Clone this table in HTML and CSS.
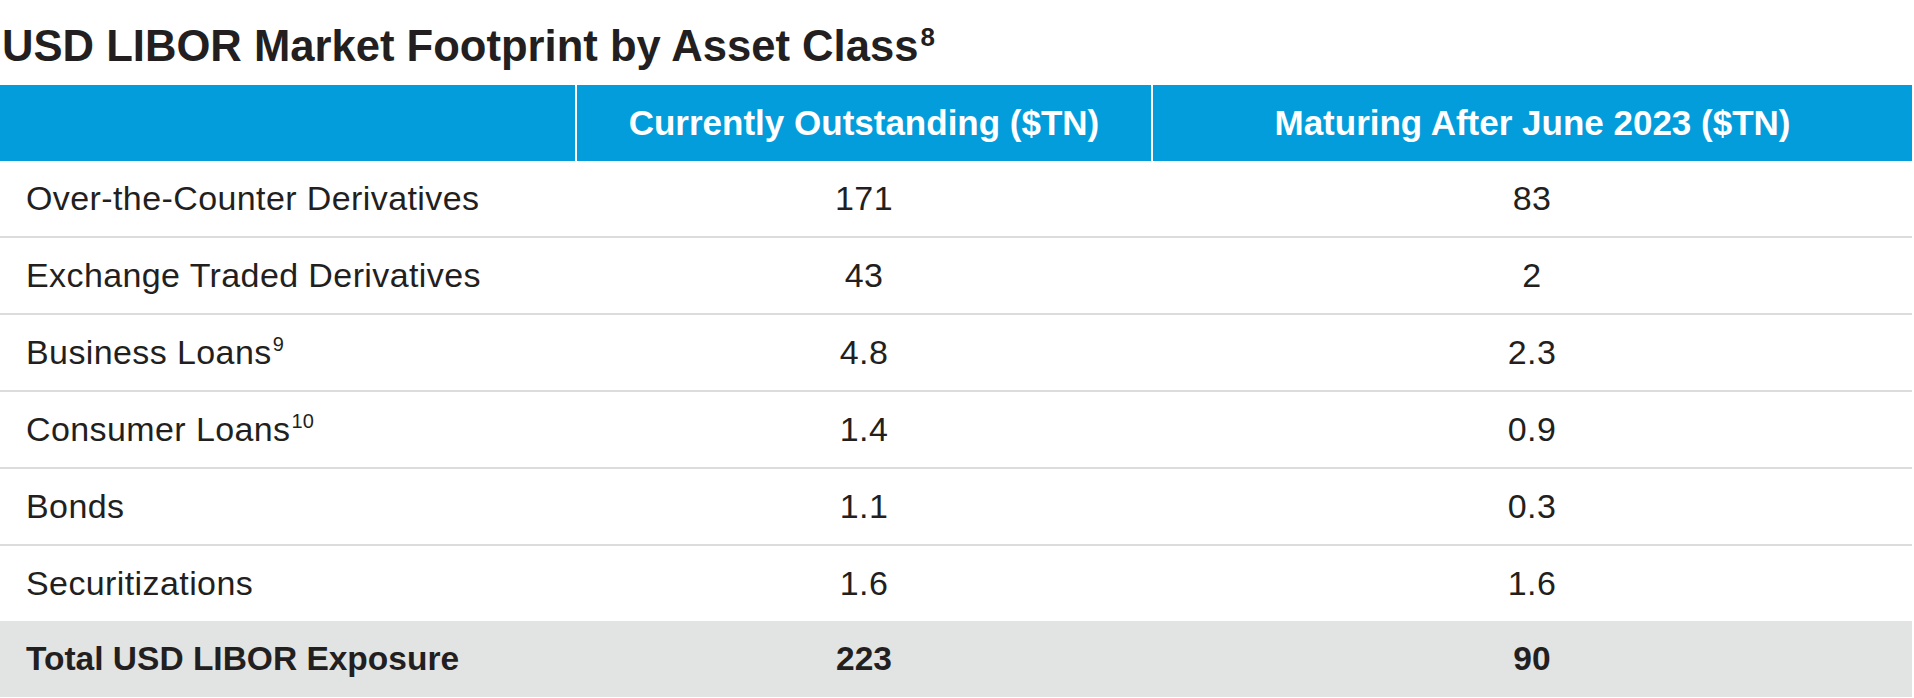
FILE: index.html
```html
<!DOCTYPE html>
<html lang="en">
<head>
<meta charset="utf-8">
<title>USD LIBOR Market Footprint by Asset Class</title>
<link rel="stylesheet" href="styles.css">
</head>
<body>
<h1 class="title">USD LIBOR Market Footprint by Asset Class<sup class="title-note">8</sup></h1>
<table class="footprint">
  <colgroup>
    <col class="col-label">
    <col class="col-out">
    <col class="col-mat">
  </colgroup>
  <thead>
    <tr class="head-row">
      <th class="head-cell"></th>
      <th class="head-cell">Currently Outstanding ($TN)</th>
      <th class="head-cell">Maturing After June 2023 ($TN)</th>
    </tr>
  </thead>
  <tbody>
    <tr class="row">
      <td class="label">Over-the-Counter Derivatives</td>
      <td class="num">171</td>
      <td class="num">83</td>
    </tr>
    <tr class="row">
      <td class="label">Exchange Traded Derivatives</td>
      <td class="num">43</td>
      <td class="num">2</td>
    </tr>
    <tr class="row">
      <td class="label">Business Loans<sup class="note">9</sup></td>
      <td class="num">4.8</td>
      <td class="num">2.3</td>
    </tr>
    <tr class="row">
      <td class="label">Consumer Loans<sup class="note">10</sup></td>
      <td class="num">1.4</td>
      <td class="num">0.9</td>
    </tr>
    <tr class="row">
      <td class="label">Bonds</td>
      <td class="num">1.1</td>
      <td class="num">0.3</td>
    </tr>
    <tr class="row row-last">
      <td class="label">Securitizations</td>
      <td class="num">1.6</td>
      <td class="num">1.6</td>
    </tr>
    <tr class="total-row">
      <td class="label">Total USD LIBOR Exposure</td>
      <td class="num">223</td>
      <td class="num">90</td>
    </tr>
  </tbody>
</table>
</body>
</html>
```

FILE: styles.css
```css
html, body {
  margin: 0;
  padding: 0;
  background: #ffffff;
}

body {
  font-family: "Liberation Sans", Arial, sans-serif;
  color: #231f20;
  width: 1914px;
}

.title {
  margin: 0;
  padding: 21px 0 14px 2px;
  font-size: 43.6px;
  line-height: 50px;
  font-weight: 700;
  color: #231f20;
  letter-spacing: 0;
}

.title-note {
  font-size: 26px;
  line-height: 0;
  vertical-align: 15px;
  font-weight: 700;
  margin-left: 2px;
}

.footprint {
  width: 1912px;
  border-collapse: collapse;
  table-layout: fixed;
}

.col-label { width: 576px; }
.col-out { width: 576px; }
.col-mat { width: 760px; }

.head-row {
  background: #039ddc;
}

.head-cell {
  height: 76px;
  padding: 0;
  color: #ffffff;
  font-size: 35px;
  font-weight: 700;
  text-align: center;
  vertical-align: middle;
  border-left: 2px solid #ffffff;
}

.head-cell:first-child {
  border-left: none;
}

.row td {
  height: 75px;
  padding: 0;
  border-bottom: 2px solid #dcdcdc;
  font-size: 34px;
  letter-spacing: 0.4px;
  vertical-align: middle;
}

.row-last td {
  border-bottom: none;
}

.label {
  text-align: left;
  padding-left: 26px !important;
}

.num {
  text-align: center;
}

.note {
  font-size: 20px;
  line-height: 0;
  vertical-align: 13px;
  letter-spacing: 0;
  margin-left: 1px;
}

.total-row {
  background: #e2e4e3;
}

.total-row td {
  height: 76px;
  padding: 0;
  font-size: 33.5px;
  font-weight: 700;
  vertical-align: middle;
}
```
